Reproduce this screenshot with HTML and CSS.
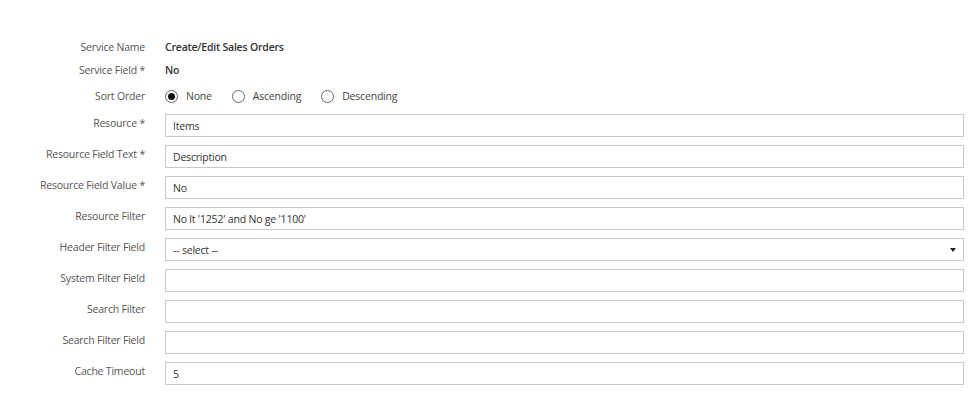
FILE: index.html
```html
<!DOCTYPE html>
<html>
<head>
<meta charset="utf-8">
<link rel="stylesheet" href="styles.css">
</head>
<body>
<div class="form">
  <div class="row static first">
    <div class="label">Service Name</div>
    <div class="value">Create/Edit Sales Orders</div>
  </div>
  <div class="row static second">
    <div class="label">Service Field *</div>
    <div class="value">No</div>
  </div>
  <div class="row static third">
    <div class="label">Sort Order</div>
    <div class="radios">
      <label class="radio"><span class="dot checked"></span>None</label>
      <label class="radio"><span class="dot"></span>Ascending</label>
      <label class="radio"><span class="dot"></span>Descending</label>
    </div>
  </div>
  <div class="row">
    <div class="label">Resource *</div>
    <div class="input">Items</div>
  </div>
  <div class="row">
    <div class="label">Resource Field Text *</div>
    <div class="input">Description</div>
  </div>
  <div class="row">
    <div class="label">Resource Field Value *</div>
    <div class="input">No</div>
  </div>
  <div class="row">
    <div class="label">Resource Filter</div>
    <div class="input">No lt '1252' and No ge '1100'</div>
  </div>
  <div class="row">
    <div class="label">Header Filter Field</div>
    <div class="input select">-- select --<span class="arrow"></span></div>
  </div>
  <div class="row">
    <div class="label">System Filter Field</div>
    <div class="input"></div>
  </div>
  <div class="row">
    <div class="label">Search Filter</div>
    <div class="input"></div>
  </div>
  <div class="row">
    <div class="label">Search Filter Field</div>
    <div class="input"></div>
  </div>
  <div class="row">
    <div class="label">Cache Timeout</div>
    <div class="input">5</div>
  </div>
</div>
</body>
</html>
```
FILE: styles.css
```css
html, body {
  margin: 0;
  padding: 0;
  background: #fff;
}
body {
  font-family: "Open Sans", "Noto Sans", sans-serif;
  font-size: 10.5px;
  letter-spacing: -0.2px;
  color: #333;
}
.form {
  padding: 38px 16px 0 0;
  display: flex;
  flex-direction: column;
  gap: 8px;
}
.row {
  display: grid;
  grid-template-columns: 145px 1fr;
  column-gap: 20px;
  align-items: start;
}
.row.static {
  align-items: center;
  height: 18px;
}
.row.second { margin-top: -3px; }
.row.third { margin-bottom: 1px; }
.label {
  text-align: right;
  color: #555;
  line-height: 18px;
}
.value {
  font-weight: 600;
  color: #333;
  line-height: 18px;
}
.radios {
  display: flex;
  align-items: center;
}
.radio {
  display: flex;
  align-items: center;
  margin-right: 20px;
  color: #444;
}
.dot {
  width: 11px;
  height: 11px;
  border: 1px solid #666;
  border-radius: 50%;
  margin-right: 8px;
  box-sizing: content-box;
  position: relative;
}
.dot.checked::after {
  content: "";
  position: absolute;
  left: 2px;
  top: 2px;
  width: 7px;
  height: 7px;
  border-radius: 50%;
  background: #111;
}
.input {
  height: 21px;
  border: 1px solid #c8c8c8;
  box-sizing: content-box;
  padding: 1px 7px 0;
  height: 20px;
  line-height: 21px;
  color: #333;
  position: relative;
}
.arrow {
  position: absolute;
  right: 7px;
  top: 9px;
  width: 0;
  height: 0;
  border-left: 3px solid transparent;
  border-right: 3px solid transparent;
  border-top: 4px solid #222;
}
```
